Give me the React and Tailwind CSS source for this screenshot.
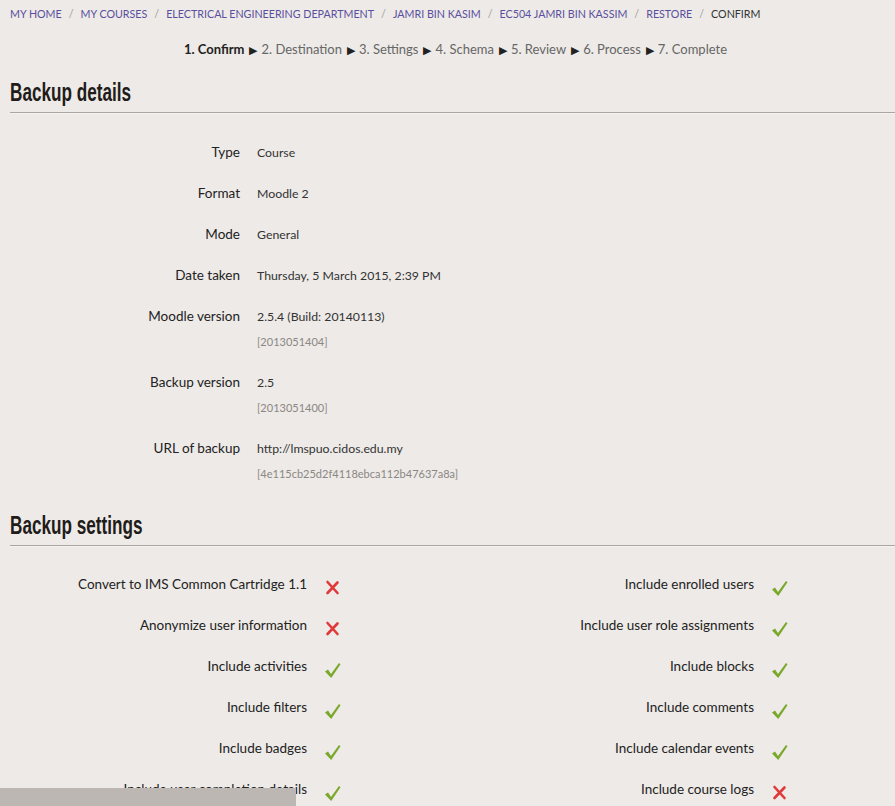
import React from 'react';

const CRUMBS = [
  'My home',
  'My courses',
  'Electrical Engineering Department',
  'JAMRI BIN KASIM',
  'EC504 JAMRI BIN KASSIM',
  'Restore',
];

const STEPS = ['2. Destination', '3. Settings', '4. Schema', '5. Review', '6. Process', '7. Complete'];

const DETAILS = [
  { label: 'Type', value: 'Course' },
  { label: 'Format', value: 'Moodle 2' },
  { label: 'Mode', value: 'General' },
  { label: 'Date taken', value: 'Thursday, 5 March 2015, 2:39 PM' },
  { label: 'Moodle version', value: '2.5.4 (Build: 20140113)', sub: '[2013051404]' },
  { label: 'Backup version', value: '2.5', sub: '[2013051400]' },
  { label: 'URL of backup', value: 'http://lmspuo.cidos.edu.my', sub: '[4e115cb25d2f4118ebca112b47637a8a]' },
];

// pairs: left column, right column
const SETTINGS = [
  [['Convert to IMS Common Cartridge 1.1', false], ['Include enrolled users', true]],
  [['Anonymize user information', false], ['Include user role assignments', true]],
  [['Include activities', true], ['Include blocks', true]],
  [['Include filters', true], ['Include comments', true]],
  [['Include badges', true], ['Include calendar events', true]],
  [['Include user completion details', true], ['Include course logs', false]],
];

function Tick() {
  return (
    <svg width="17" height="18" viewBox="0 0 17 18">
      <path d="M1 10.5 L4 8.5 L7 13 L15 2 L16.5 3.2 L7.2 17 Z" fill="#7aa82a" />
    </svg>
  );
}

function Cross() {
  return (
    <svg width="15" height="15" viewBox="0 0 15 15">
      <path d="M2.5 2 L12.5 13 M12.5 2.5 L2.5 13" stroke="#e0393a" strokeWidth="2.6" strokeLinecap="round" />
    </svg>
  );
}

function SectionHeading({ children }) {
  return (
    <div className="pl-[10px]">
      <h2
        className="inline-block origin-left scale-x-[0.66] text-[26px] leading-[30px] text-[#1f1c1a] font-bold"
        style={{ fontFamily: '"Liberation Sans", sans-serif' }}
      >
        {children}
      </h2>
      <div className="mt-[5px] border-t border-[#a9a6a3] border-b border-b-[#f5f3f1]" />
    </div>
  );
}

function SettingCell({ label, on }) {
  return (
    <div className="flex items-center h-[41px]">
      <div className="w-[307px] text-right text-[13.5px] text-[#222]">{label}</div>
      <div className="ml-[15px] mt-[6px] w-[20px] flex justify-center">{on ? <Tick /> : <Cross />}</div>
    </div>
  );
}

export default function App() {
  return (
    <div
      className="relative w-[895px] h-[806px] overflow-hidden bg-[#edeae7]"
      style={{ fontFamily: 'Lato, "Open Sans", "Liberation Sans", sans-serif' }}
    >
      {/* breadcrumb */}
      <div className="flex items-center pl-[10px] pt-[6px] h-[22px] text-[10.7px] uppercase">
        {CRUMBS.map(c => (
          <React.Fragment key={c}>
            <span className="text-[#5a4f9e]">{c}</span>
            <span className="text-[#a09d9a] px-[7px]">/</span>
          </React.Fragment>
        ))}
        <span className="text-[#333]">Confirm</span>
      </div>

      {/* stepper */}
      <div className="flex justify-center items-center mt-[18px] h-[20px] text-[13px] text-[#666] pl-[16px]">
        <span className="font-bold text-[#222]">1. Confirm</span>
        {STEPS.map(s => (
          <React.Fragment key={s}>
            <span className="text-[#222] text-[11px] ml-[5px] mr-[4px]">&#9654;</span>
            <span>{s}</span>
          </React.Fragment>
        ))}
      </div>

      <div className="mt-[17px]">
        <SectionHeading>Backup details</SectionHeading>
      </div>

      {/* details */}
      <div className="mt-[29px]">
        {DETAILS.map(d => (
          <div key={d.label} className="flex mb-[21px]">
            <div className="w-[240px] text-right text-[13.5px] leading-[20px] text-[#222] -mt-[1px]">{d.label}</div>
            <div className="ml-[17px]">
              <div className="text-[12.3px] leading-[20px] text-[#333]">{d.value}</div>
              {d.sub && <div className="mt-[5px] text-[11px] leading-[20px] text-[#8a8784]">{d.sub}</div>}
            </div>
          </div>
        ))}
      </div>

      <div className="mt-[26px]">
        <SectionHeading>Backup settings</SectionHeading>
      </div>

      {/* settings */}
      <div className="mt-[17px] grid grid-cols-[447px_448px]">
        {SETTINGS.map(([l, r]) => (
          <React.Fragment key={l[0]}>
            <SettingCell label={l[0]} on={l[1]} />
            <SettingCell label={r[0]} on={r[1]} />
          </React.Fragment>
        ))}
      </div>

      {/* grey bar lying over the bottom-left corner */}
      <div className="absolute left-0 bottom-0 w-[296px] h-[18px] bg-[#bcb7b3]" />
    </div>
  );
}
